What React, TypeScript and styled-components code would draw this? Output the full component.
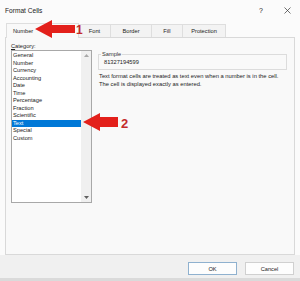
import React from 'react';
import styled, { createGlobalStyle } from 'styled-components';

const GlobalStyle = createGlobalStyle`
  html, body {
    margin: 0;
    padding: 0;
    background: #f0f0f0;
  }
  body {
    font-family: 'Liberation Sans', Arial, sans-serif;
  }
`;

const Window = styled.div`
  position: relative;
  width: 300px;
  height: 281px;
  background: #f0f0f0;
  display: flex;
  flex-direction: column;
  overflow: hidden;
  color: #222;
`;

const TitleBar = styled.div`
  height: 21px;
  display: flex;
  align-items: center;
  padding: 0 0 0 5px;
  background: #fbfbfb;
  font-size: 6.6px;
`;

const Title = styled.div`
  flex: 1;
`;

const TitleButton = styled.div`
  width: 26px;
  display: flex;
  justify-content: center;
  align-items: center;
  font-size: 7px;
  color: #222;
`;

const TabStrip = styled.div`
  display: flex;
  padding-left: 6px;
  height: 16px;
  background: #fbfbfb;
  align-items: flex-end;
`;

const Tab = styled.div<{ $w: number; $active?: boolean; $left?: boolean }>`
  width: ${(p) => p.$w}px;
  height: ${(p) => (p.$active ? 15 : 13)}px;
  box-sizing: border-box;
  display: flex;
  align-items: center;
  justify-content: ${(p) => (p.$left ? 'flex-start' : 'center')};
  padding-left: ${(p) => (p.$left ? 6 : 0)}px;
  font-size: 5.7px;
  background: ${(p) => (p.$active ? '#f9f9f9' : '#f3f3f3')};
  border: 1px solid #dedede;
  border-bottom: none;
  border-left: ${(p) => (p.$active ? '1px solid #dedede' : 'none')};
  margin-bottom: ${(p) => (p.$active ? -1 : 0)}px;
  position: relative;
`;

const Body = styled.div`
  flex: 1;
  display: flex;
  flex-direction: column;
  background: #fbfbfb;
  padding: 0 5px 0 5px;
`;

const Panel = styled.div`
  height: 218px;
  box-sizing: border-box;
  background: #f9f9f9;
  border: 1px solid #d9d9d9;
  display: flex;
  padding: 5px 5px 0 5px;
  gap: 6px;
`;

const LeftCol = styled.div`
  width: 81px;
  display: flex;
  flex-direction: column;
`;

const Label = styled.div`
  font-size: 5.7px;
  height: 7px;
  line-height: 7px;
  u {
    text-decoration: underline;
  }
`;

const ListBox = styled.div`
  height: 153px;
  box-sizing: border-box;
  border: 1px solid #a8a8a8;
  background: #fff;
  display: flex;
`;

const Items = styled.div`
  flex: 1;
  padding-top: 1px;
`;

const Item = styled.div<{ $sel?: boolean }>`
  height: 7.5px;
  line-height: 7.5px;
  font-size: 5.7px;
  padding-left: 1px;
  background: ${(p) => (p.$sel ? '#0078d7' : 'transparent')};
  color: ${(p) => (p.$sel ? '#fff' : '#222')};
`;

const ScrollBar = styled.div`
  width: 10px;
  background: #f0f0f0;
  display: flex;
  flex-direction: column;
  justify-content: space-between;
  align-items: center;
  padding: 3px 0;
  box-sizing: border-box;
`;

const RightCol = styled.div`
  flex: 1;
  display: flex;
  flex-direction: column;
  padding-top: 8px;
  padding-right: 2px;
`;

const Group = styled.fieldset`
  margin: 0;
  padding: 1px 0 2px 5px;
  border: 1px solid #dcdcdc;
  min-width: 0;
  legend {
    font-size: 5.7px;
    padding: 0 1px;
    margin-left: -3px;
    color: #333;
  }
`;

const SampleValue = styled.div`
  font-size: 5.7px;
  height: 9px;
  line-height: 9px;
`;

const Description = styled.div`
  font-size: 5.8px;
  line-height: 8px;
  margin-top: 2px;
  padding-left: 1px;
`;

const Footer = styled.div`
  flex: 1;
  display: flex;
  justify-content: flex-end;
  align-items: flex-start;
  gap: 8px;
  padding: 7px 6px 0 0;
  background: #f0f0f0;
  margin: 0 -5px;
  border-bottom: 3px solid #dadada;
`;

const Button = styled.div<{ $def?: boolean }>`
  width: 49px;
  height: 13px;
  box-sizing: border-box;
  display: flex;
  align-items: center;
  justify-content: center;
  font-size: 5.7px;
  background: #fdfdfd;
  border: 1px solid ${(p) => (p.$def ? '#8fb1cf' : '#d0d0d0')};
`;

const Overlay = styled.svg`
  position: absolute;
  left: 0;
  top: 0;
  pointer-events: none;
`;

const categories = [
  'General', 'Number', 'Currency', 'Accounting', 'Date', 'Time',
  'Percentage', 'Fraction', 'Scientific', 'Text', 'Special', 'Custom',
];

const tabs = [
  { name: 'Font', w: 32 },
  { name: 'Border', w: 41 },
  { name: 'Fill', w: 31 },
  { name: 'Protection', w: 43 },
];

export default function App() {
  return (
    <>
      <GlobalStyle />
      <Window>
        <TitleBar>
          <Title>Format Cells</Title>
          <TitleButton>?</TitleButton>
          <TitleButton>
            <svg width="7" height="7" viewBox="0 0 7 7">
              <path d="M0.5 0.5L6.5 6.5M6.5 0.5L0.5 6.5" stroke="#333" strokeWidth="0.7" />
            </svg>
          </TitleButton>
        </TitleBar>
        <TabStrip>
          <Tab $w={73} $active $left>Number</Tab>
          {tabs.map((t) => (
            <Tab key={t.name} $w={t.w}>{t.name}</Tab>
          ))}
        </TabStrip>
        <Body>
          <Panel>
            <LeftCol>
              <Label><u>C</u>ategory:</Label>
              <ListBox>
                <Items>
                  {categories.map((c) => (
                    <Item key={c} $sel={c === 'Text'}>{c}</Item>
                  ))}
                </Items>
                <ScrollBar>
                  <svg width="5" height="3" viewBox="0 0 5 3">
                    <path d="M0 3L2.5 0L5 3Z" fill="#a8a8a8" />
                  </svg>
                  <svg width="5" height="3" viewBox="0 0 5 3">
                    <path d="M0 0L2.5 3L5 0Z" fill="#606060" />
                  </svg>
                </ScrollBar>
              </ListBox>
            </LeftCol>
            <RightCol>
              <Group>
                <legend>Sample</legend>
                <SampleValue>81327194599</SampleValue>
              </Group>
              <Description>
                Text format cells are treated as text even when a number is in the cell.
                <br />
                The cell is displayed exactly as entered.
              </Description>
            </RightCol>
          </Panel>
          <Footer>
            <Button $def>OK</Button>
            <Button>Cancel</Button>
          </Footer>
        </Body>
        <Overlay width="300" height="281" viewBox="0 0 300 281">
          <polygon points="35,29 52,20 52,25 75,25 75,33 52,33 52,38" fill="#e3201b" />
          <text x="76" y="34" fontSize="12" fontWeight="bold" fill="#c42b2b" fontFamily="Liberation Sans, Arial, sans-serif">1</text>
          <polygon points="83,122 100,113 100,117 118,117 118,127 100,127 100,131" fill="#e3201b" />
          <text x="121" y="128" fontSize="13" fontWeight="bold" fill="#c42b2b" fontFamily="Liberation Sans, Arial, sans-serif">2</text>
        </Overlay>
      </Window>
    </>
  );
}
